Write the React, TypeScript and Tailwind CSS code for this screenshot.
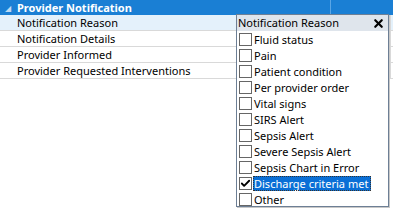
import { Check, X } from 'lucide-react'

const rows = [
    'Notification Reason',
    'Notification Details',
    'Provider Informed',
    'Provider Requested Interventions',
]

const options = [
    'Fluid status',
    'Pain',
    'Patient condition',
    'Per provider order',
    'Vital signs',
    'SIRS Alert',
    'Sepsis Alert',
    'Severe Sepsis Alert',
    'Sepsis Chart in Error',
    'Discharge criteria met',
    'Other',
]

export default function App() {
    return (
        <div
            className="relative w-[393px] h-[212px] bg-white overflow-hidden text-[11px] text-black"
            style={{ fontFamily: '"Noto Sans", "Open Sans", sans-serif' }}
        >
            {/* group header */}
            <div className="flex h-[15px] bg-[#1a7fd4] text-white">
                <div className="flex items-center w-[331px] border-r border-[#5aa6e6]">
                    <span className="w-[17px] pl-[5px] text-[8px] leading-none text-[#bcd9f3]">◢</span>
                    <span className="font-bold leading-[15px]">Provider Notification</span>
                </div>
                <div className="flex-1" />
            </div>

            {/* grid rows */}
            {rows.map((r, i) => (
                <div
                    key={r}
                    className={`flex h-[16px] border-b border-[#d9d9d9] ${i === 0 ? 'bg-[#e4f1fb]' : ''}`}
                >
                    <div className="w-[391px] pl-[17px] leading-[16px] border-r border-[#d9d9d9]">{r}</div>
                </div>
            ))}

            {/* dropdown popup */}
            <div className="absolute left-[236px] top-[14px] w-[153px] h-[193px] border border-[#6d7f95] bg-white shadow-[1px_1px_0_#c8c8c8]">
                <div className="flex items-center justify-between h-[16px] bg-[#dfe5ec] pl-[1px] pr-[3px]">
                    <span className="leading-[16px]">Notification Reason</span>
                    <X size={13} strokeWidth={4} />
                </div>
                <div className="flex flex-col">
                    {options.map(o => {
                        const sel = o === 'Discharge criteria met'
                        return (
                            <div key={o} className="flex items-center h-[16px] pl-[2px]">
                                <div className="flex shrink-0 items-center justify-center w-[13px] h-[13px] border border-[#666] bg-white">
                                    {sel && <Check size={11} strokeWidth={4} />}
                                </div>
                                <span
                                    className={`ml-[1px] pl-[1px] pr-[3px] leading-[15px] whitespace-nowrap ${sel ? 'bg-[#0a6fd6] text-white outline outline-1 outline-dotted outline-[#333] -outline-offset-1' : ''}`}
                                >
                                    {o}
                                </span>
                            </div>
                        )
                    })}
                </div>
            </div>
        </div>
    )
}
